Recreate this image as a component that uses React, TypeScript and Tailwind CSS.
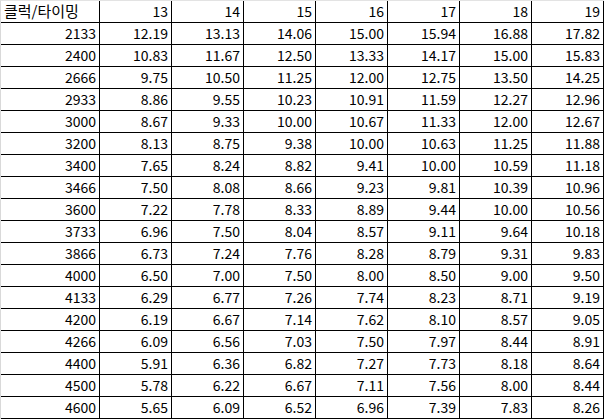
import React from "react";

const header = ["13", "14", "15", "16", "17", "18", "19"];
const rows: [string, string[]][] = [
  ["2133", ["12.19", "13.13", "14.06", "15.00", "15.94", "16.88", "17.82"]],
  ["2400", ["10.83", "11.67", "12.50", "13.33", "14.17", "15.00", "15.83"]],
  ["2666", ["9.75", "10.50", "11.25", "12.00", "12.75", "13.50", "14.25"]],
  ["2933", ["8.86", "9.55", "10.23", "10.91", "11.59", "12.27", "12.96"]],
  ["3000", ["8.67", "9.33", "10.00", "10.67", "11.33", "12.00", "12.67"]],
  ["3200", ["8.13", "8.75", "9.38", "10.00", "10.63", "11.25", "11.88"]],
  ["3400", ["7.65", "8.24", "8.82", "9.41", "10.00", "10.59", "11.18"]],
  ["3466", ["7.50", "8.08", "8.66", "9.23", "9.81", "10.39", "10.96"]],
  ["3600", ["7.22", "7.78", "8.33", "8.89", "9.44", "10.00", "10.56"]],
  ["3733", ["6.96", "7.50", "8.04", "8.57", "9.11", "9.64", "10.18"]],
  ["3866", ["6.73", "7.24", "7.76", "8.28", "8.79", "9.31", "9.83"]],
  ["4000", ["6.50", "7.00", "7.50", "8.00", "8.50", "9.00", "9.50"]],
  ["4133", ["6.29", "6.77", "7.26", "7.74", "8.23", "8.71", "9.19"]],
  ["4200", ["6.19", "6.67", "7.14", "7.62", "8.10", "8.57", "9.05"]],
  ["4266", ["6.09", "6.56", "7.03", "7.50", "7.97", "8.44", "8.91"]],
  ["4400", ["5.91", "6.36", "6.82", "7.27", "7.73", "8.18", "8.64"]],
  ["4500", ["5.78", "6.22", "6.67", "7.11", "7.56", "8.00", "8.44"]],
  ["4600", ["5.65", "6.09", "6.52", "6.96", "7.39", "7.83", "8.26"]],
];

const cell =
  "h-[22px] border-r border-b border-black flex items-end justify-end pr-[3px] pb-[2px] leading-[18px] whitespace-nowrap";

export default function App() {
  return (
    <div className="w-[604px] h-[419px] bg-white overflow-hidden">
      <div
        className="grid grid-cols-[99px_repeat(7,72px)] border-t border-l border-t-[#e3e3e3] border-l-[#d9d9d9] text-[14px] text-black"
        style={{ fontFamily: '"Noto Sans CJK KR", "Noto Sans", sans-serif' }}
      >
        <div className="h-[22px] border-r border-b border-black flex items-end justify-start pl-[3px] pb-[2px] leading-[18px] text-[15px] whitespace-nowrap">
          클럭/타이밍
        </div>
        {header.map((h) => (
          <div key={h} className={cell}>
            {h}
          </div>
        ))}
        {rows.map(([clk, vals]) => (
          <React.Fragment key={clk}>
            <div className={cell}>{clk}</div>
            {vals.map((v, i) => (
              <div key={i} className={cell}>
                {v}
              </div>
            ))}
          </React.Fragment>
        ))}
      </div>
    </div>
  );
}
